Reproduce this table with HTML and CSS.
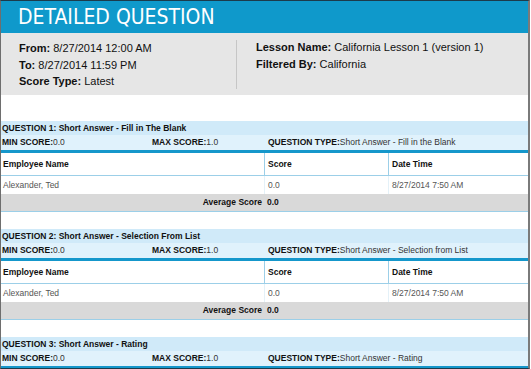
FILE: index.html
```html
<!DOCTYPE html>
<html>
<head>
<meta charset="utf-8">
<link rel="stylesheet" href="styles.css">
</head>
<body>
<div class="frame">
  <div class="banner"><h1 class="title">DETAILED QUESTION</h1></div>
  <div class="info">
    <div class="info-col info-left">
      <div class="info-line"><b>From:</b> 8/27/2014 12:00 AM</div>
      <div class="info-line"><b>To:</b> 8/27/2014 11:59 PM</div>
      <div class="info-line"><b>Score Type:</b> Latest</div>
    </div>
    <div class="info-col info-right">
      <div class="info-line"><b>Lesson Name:</b> California Lesson 1 (version 1)</div>
      <div class="info-line"><b>Filtered By:</b> California</div>
    </div>
  </div>
  <div class="spacer"></div>

  <div class="question">
    <div class="q-title">QUESTION 1: Short Answer - Fill in The Blank</div>
    <div class="q-meta">
      <div><b>MIN SCORE:</b>0.0</div>
      <div><b>MAX SCORE:</b>1.0</div>
      <div><b>QUESTION TYPE:</b>Short Answer - Fill in the Blank</div>
    </div>
    <div class="results">
      <div class="row head"><div class="c c1">Employee Name</div><div class="c c2">Score</div><div class="c c3">Date Time</div></div>
      <div class="row data"><div class="c c1">Alexander, Ted</div><div class="c c2">0.0</div><div class="c c3">8/27/2014 7:50 AM</div></div>
      <div class="row avg"><div class="c a1">Average Score</div><div class="c a2">0.0</div></div>
    </div>
  </div>

  <div class="question">
    <div class="q-title">QUESTION 2: Short Answer - Selection From List</div>
    <div class="q-meta">
      <div><b>MIN SCORE:</b>0.0</div>
      <div><b>MAX SCORE:</b>1.0</div>
      <div><b>QUESTION TYPE:</b>Short Answer - Selection from List</div>
    </div>
    <div class="results">
      <div class="row head"><div class="c c1">Employee Name</div><div class="c c2">Score</div><div class="c c3">Date Time</div></div>
      <div class="row data"><div class="c c1">Alexander, Ted</div><div class="c c2">0.0</div><div class="c c3">8/27/2014 7:50 AM</div></div>
      <div class="row avg"><div class="c a1">Average Score</div><div class="c a2">0.0</div></div>
    </div>
  </div>

  <div class="question">
    <div class="q-title">QUESTION 3: Short Answer - Rating</div>
    <div class="q-meta">
      <div><b>MIN SCORE:</b>0.0</div>
      <div><b>MAX SCORE:</b>1.0</div>
      <div><b>QUESTION TYPE:</b>Short Answer - Rating</div>
    </div>
    <div class="results"></div>
  </div>
</div>
</body>
</html>
```
FILE: styles.css
```css
html, body {
  margin: 0;
  padding: 0;
  background: #ffffff;
}
body {
  font-family: "Liberation Sans", Arial, sans-serif;
  overflow: hidden;
  height: 369px;
}
.frame {
  box-sizing: border-box;
  width: 530px;
  height: 369px;
  border-top: 1px solid #1c3b4b;
  border-left: 1px solid #6e6e6e;
  border-right: 2px solid #7a7a7a;
  border-bottom: 1px solid #1c3b4b;
  overflow: hidden;
  background: #ffffff;
}
.banner {
  background: #0f99cb;
  height: 32px;
  padding-left: 17px;
  display: flex;
  align-items: center;
}
.title {
  margin: 0;
  font-family: "DejaVu Sans", sans-serif;
  font-stretch: condensed;
  font-weight: normal;
  font-size: 21px;
  letter-spacing: 0;
  color: #ffffff;
  line-height: 32px;
}
.info {
  background: #e6e6e6;
  height: 62px;
  display: flex;
  align-items: flex-start;
  padding-left: 18px;
  box-sizing: border-box;
  padding-top: 6px;
}
.info-col {
  display: flex;
  flex-direction: column;
}
.info-left {
  width: 217px;
  height: 49px;
  margin-top: 1px;
  border-right: 1px solid #c6c6c6;
}
.info-right {
  padding-left: 19px;
}
.info-line {
  font-size: 11px;
  line-height: 16.5px;
  color: #111111;
  white-space: nowrap;
}
.info-line b {
  font-weight: bold;
}
.spacer {
  height: 26px;
}
.question {
  margin-bottom: 17px;
}
.q-title {
  background: #d0eaf9;
  height: 14px;
  line-height: 14px;
  padding-left: 1px;
  font-size: 8.5px;
  font-weight: bold;
  color: #111111;
  white-space: nowrap;
}
.q-meta {
  background: #e0f2fc;
  height: 15px;
  line-height: 15px;
  display: grid;
  grid-template-columns: 150px 116px 1fr;
  padding-left: 1px;
  font-size: 8.5px;
  color: #333333;
  white-space: nowrap;
}
.q-meta b {
  color: #111111;
}
.results {
  border-top: 3px solid #1597cb;
}
.row {
  display: grid;
  grid-template-columns: 264px 124px 1fr;
  font-size: 8.5px;
  white-space: nowrap;
}
.c {
  padding-left: 2px;
}
.c1, .c2 {
  border-right: 1px solid #9ccfe8;
}
.head {
  height: 22px;
  line-height: 22px;
  font-weight: bold;
  color: #111111;
  border-bottom: 1px solid #9ccfe8;
}
.head .c2, .head .c3 {
  padding-left: 3px;
}
.data {
  height: 18px;
  line-height: 18px;
  color: #555555;
}
.data .c2, .data .c3 {
  padding-left: 3px;
}
.data .c1, .data .c2 {
  border-right-color: #e4f1f8;
}
.avg {
  grid-template-columns: 264px 1fr;
  background: #d9d9d9;
  height: 17px;
  line-height: 17px;
  font-weight: bold;
  color: #111111;
  border-bottom: 1px solid #9ccfe8;
}
.avg .a1 {
  text-align: right;
  padding-right: 3px;
  border-right: none;
}
.avg .a2 {
  padding-left: 2px;
}
```
